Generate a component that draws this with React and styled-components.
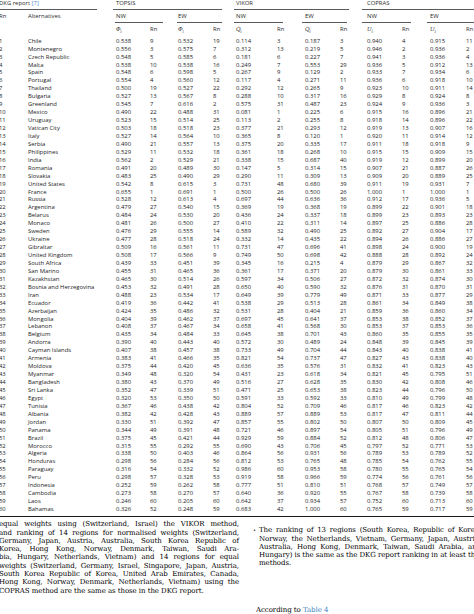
import React from 'react'
import styled, { createGlobalStyle } from 'styled-components'

const GlobalStyle = createGlobalStyle`
  html, body {
    margin: 0;
    padding: 0;
    background: #fff;
  }
`

const COLS = '29px 88px 34px 28px 35px 23px 41px 28px 35px 27px 35px 28px 36px 40px'

const Page = styled.div`
  width: 474px;
  height: 614px;
  overflow: hidden;
  background: #fff;
`

const Sheet = styled.div`
  width: 540px;
  margin: -1px 0 0 -1px;
  font-family: "Open Sans", "Liberation Sans", Arial, sans-serif;
  color: #1c1c1c;
`

const HeadRow = styled.div`
  display: grid;
  grid-template-columns: ${COLS};
  font-size: 5.9px;
  line-height: 8px;
  margin-top: ${p => p.$mt || 0}px;
`

const Group = styled.div`
  grid-column: span ${p => p.$span};
  margin: 0 ${p => p.$mr || 0}px 0 ${p => p.$ml || 0}px;
  padding: 0 0 2px ${p => -(p.$ml || 0)}px;
  border-bottom: 0.9px solid #5a5a5a;
  white-space: nowrap;
  color: #2a2a2a;
`

const HeadCell = styled.div`
  white-space: nowrap;
  color: #2a2a2a;
`

const Ref = styled.span`
  color: #4a86c8;
`

const Greek = styled.i`
  font-family: "DejaVu Serif", serif;
  font-size: 5.6px;
`

const Sub = styled.sub`
  font-size: 4px;
  line-height: 0;
  vertical-align: -1px;
`

const Body = styled.div`
  display: grid;
  grid-template-columns: ${COLS};
  grid-auto-rows: 7.95px;
  font-size: 5.9px;
  line-height: 7.95px;
  margin-top: 4.7px;
  padding-bottom: 2px;
  border-bottom: 1.3px solid #1a1a1a;
`

const Cell = styled.div`
  white-space: nowrap;
`

const Prose = styled.div`
  display: flex;
  gap: 10px;
  font-family: "DejaVu Serif", "Liberation Serif", serif;
  font-size: 7px;
  letter-spacing: -0.06px;
  line-height: 8.3px;
  color: #000;
`

const LeftCol = styled.div`
  flex: none;
  width: 240px;
  padding-top: 3.3px;
`

const RightCol = styled.div`
  flex: none;
  width: 240px;
  padding-top: 9.3px;
`

const Line = styled.div`
  white-space: nowrap;
  text-align: ${p => (p.$last ? 'left' : 'justify')};
  text-align-last: ${p => (p.$last ? 'left' : 'justify')};
`

const Item = styled.div`
  display: flex;
`

const Bullet = styled.span`
  flex: none;
  width: 10px;
  padding-left: 4px;
  box-sizing: border-box;
  font-size: 5px;
`

const ItemText = styled.div`
  flex: none;
  width: 222px;
`

const Para = styled.div`
  margin-top: 38.5px;
  padding-left: 7px;
  white-space: nowrap;
`

const Link = styled.span`
  color: #3b7fc4;
`

const rows = [
  ['Chile', '0.538', 9, '0.532', 19, '0.114', 3, '0.187', 3, '0.940', 4, '0.915', 11],
  ['Montenegro', '0.556', 3, '0.575', 7, '0.312', 13, '0.219', 5, '0.946', 2, '0.936', 2],
  ['Czech Republic', '0.548', 5, '0.585', 6, '0.181', 6, '0.227', 7, '0.941', 3, '0.936', 4],
  ['Malta', '0.538', 10, '0.538', 16, '0.249', 7, '0.553', 29, '0.936', 5, '0.912', 13],
  ['Spain', '0.548', 6, '0.598', 5, '0.267', 9, '0.129', 2, '0.933', 7, '0.934', 6],
  ['Portugal', '0.554', 4, '0.560', 12, '0.117', 4, '0.271', 11, '0.936', 6, '0.918', 10],
  ['Thailand', '0.500', 19, '0.527', 22, '0.292', 12, '0.265', 9, '0.923', 10, '0.911', 14],
  ['Bulgaria', '0.527', 13, '0.567', 8, '0.288', 10, '0.317', 16, '0.929', 8, '0.924', 8],
  ['Greenland', '0.545', 7, '0.616', 2, '0.575', 31, '0.487', 23, '0.924', 9, '0.936', 3],
  ['Mexico', '0.490', 22, '0.488', 31, '0.081', 1, '0.225', 6, '0.915', 16, '0.896', 21],
  ['Uruguay', '0.523', 15, '0.514', 25, '0.113', 2, '0.255', 8, '0.918', 14, '0.896', 22],
  ['Vatican City', '0.503', 18, '0.518', 23, '0.377', 21, '0.293', 12, '0.919', 13, '0.907', 16],
  ['Italy', '0.527', 14, '0.564', 10, '0.365', 8, '0.120', 1, '0.920', 11, '0.914', 12],
  ['Serbia', '0.490', 21, '0.557', 13, '0.375', 20, '0.335', 17, '0.911', 18, '0.918', 9],
  ['Philippines', '0.529', 11, '0.532', 18, '0.361', 18, '0.268', 10, '0.915', 15, '0.909', 15],
  ['India', '0.562', 2, '0.529', 21, '0.338', 15, '0.687', 40, '0.919', 12, '0.899', 20],
  ['Romania', '0.491', 20, '0.489', 30, '0.147', 5, '0.314', 15, '0.907', 21, '0.887', 26],
  ['Slovakia', '0.483', 25, '0.490', 29, '0.290', 11, '0.309', 13, '0.909', 20, '0.889', 25],
  ['United States', '0.542', 8, '0.615', 3, '0.731', 48, '0.680', 39, '0.911', 19, '0.931', 7],
  ['France', '0.655', 1, '0.691', 1, '0.500', 26, '0.500', 26, '1.000', 1, '1.000', 1],
  ['Russia', '0.528', 12, '0.613', 4, '0.697', 44, '0.636', 36, '0.912', 17, '0.936', 5],
  ['Argentina', '0.479', 27, '0.540', 15, '0.369', 19, '0.368', 19, '0.899', 22, '0.901', 18],
  ['Belarus', '0.484', 24, '0.530', 20, '0.436', 24, '0.337', 18, '0.899', 23, '0.893', 23],
  ['Monaco', '0.481', 26, '0.500', 27, '0.410', 22, '0.311', 14, '0.897', 25, '0.886', 28],
  ['Sweden', '0.476', 29, '0.555', 14, '0.589', 32, '0.490', 25, '0.892', 27, '0.904', 17],
  ['Ukraine', '0.477', 28, '0.518', 24, '0.332', 14, '0.435', 22, '0.894', 26, '0.886', 27],
  ['Gibraltar', '0.509', 16, '0.561', 11, '0.731', 47, '0.696', 41, '0.898', 24, '0.900', 19],
  ['United Kingdom', '0.508', 17, '0.566', 9, '0.749', 50, '0.698', 42, '0.888', 28, '0.892', 24],
  ['South Africa', '0.439', 33, '0.451', 39, '0.345', 16, '0.215', 4, '0.879', 29, '0.867', 32],
  ['San Marino', '0.455', 31, '0.465', 36, '0.361', 17, '0.371', 20, '0.879', 30, '0.861', 33],
  ['Kazakhstan', '0.465', 30, '0.514', 26, '0.597', 34, '0.506', 27, '0.872', 32, '0.874', 30],
  ['Bosnia and Herzegovina', '0.453', 32, '0.491', 28, '0.650', 40, '0.590', 32, '0.876', 31, '0.870', 31],
  ['Iran', '0.488', 23, '0.534', 17, '0.649', 39, '0.779', 49, '0.871', 33, '0.877', 29],
  ['Ecuador', '0.419', 36, '0.442', 41, '0.538', 29, '0.513', 28, '0.861', 34, '0.849', 38],
  ['Azerbaijan', '0.424', 35, '0.486', 32, '0.531', 28, '0.404', 21, '0.859', 36, '0.860', 34],
  ['Mongolia', '0.404', 39, '0.462', 37, '0.697', 45, '0.641', 37, '0.853', 38, '0.852', 37],
  ['Lebanon', '0.408', 37, '0.467', 34, '0.658', 41, '0.568', 30, '0.853', 37, '0.853', 36],
  ['Belgium', '0.435', 34, '0.484', 33, '0.645', 38, '0.701', 43, '0.860', 35, '0.855', 35],
  ['Andorra', '0.390', 40, '0.443', 40, '0.572', 30, '0.489', 24, '0.848', 39, '0.845', 39],
  ['Cayman Islands', '0.407', 38, '0.457', 38, '0.733', 49, '0.704', 44, '0.843', 40, '0.838', 41],
  ['Armenia', '0.383', 41, '0.466', 35, '0.821', 54, '0.737', 47, '0.827', 43, '0.838', 40],
  ['Moldova', '0.375', 44, '0.420', 45, '0.636', 35, '0.576', 31, '0.832', 41, '0.823', 43],
  ['Myanmar', '0.349', 48, '0.320', 54, '0.431', 23, '0.618', 34, '0.821', 45, '0.795', 51],
  ['Bangladesh', '0.380', 43, '0.370', 49, '0.516', 27, '0.628', 35, '0.830', 42, '0.808', 46],
  ['Sri Lanka', '0.352', 47, '0.339', 51, '0.471', 25, '0.653', 38, '0.823', 44, '0.796', 50],
  ['Egypt', '0.320', 53, '0.350', 50, '0.591', 33, '0.592', 33, '0.810', 49, '0.799', 48],
  ['Tunisia', '0.367', 46, '0.438', 42, '0.804', 52, '0.709', 46, '0.817', 46, '0.823', 42],
  ['Albania', '0.382', 42, '0.428', 43, '0.889', 57, '0.889', 53, '0.817', 47, '0.811', 44],
  ['Jordan', '0.330', 51, '0.392', 47, '0.857', 55, '0.802', 50, '0.807', 50, '0.809', 45],
  ['Panama', '0.344', 49, '0.391', 48, '0.721', 46, '0.897', 54, '0.805', 51, '0.796', 49],
  ['Brazil', '0.375', 45, '0.421', 44, '0.929', 59, '0.884', 52, '0.812', 48, '0.806', 47],
  ['Morocco', '0.315', 55, '0.292', 55, '0.690', 43, '0.706', 45, '0.797', 52, '0.771', 53],
  ['Algeria', '0.338', 50, '0.403', 46, '0.864', 56, '0.931', 56, '0.789', 53, '0.789', 52],
  ['Honduras', '0.298', 56, '0.284', 56, '0.812', 53, '0.765', 48, '0.785', 54, '0.762', 55],
  ['Paraguay', '0.316', 54, '0.332', 52, '0.986', 60, '0.953', 58, '0.780', 55, '0.765', 54],
  ['Peru', '0.298', 57, '0.328', 53, '0.919', 58, '0.966', 59, '0.774', 56, '0.761', 56],
  ['Indonesia', '0.252', 59, '0.262', 58, '0.777', 51, '0.810', 51, '0.768', 57, '0.749', 57],
  ['Cambodia', '0.273', 58, '0.270', 57, '0.640', 36, '0.920', 55, '0.767', 58, '0.739', 58],
  ['Laos', '0.246', 60, '0.205', 60, '0.642', 37, '0.934', 57, '0.752', 60, '0.713', 60],
  ['Bahamas', '0.326', 52, '0.248', 59, '0.683', 42, '1.000', 60, '0.765', 59, '0.717', 59],
]

const leftLines = [
  'equal weights using (Switzerland, Israel) the VIKOR method,',
  'and ranking of 14 regions for normalised weights (Switzerland,',
  'Germany, Japan, Austria, Australia, South Korea Republic of',
  'Korea, Hong Kong, Norway, Denmark, Taiwan, Saudi Ara-',
  'bia, Hungary, Netherlands, Vietnam) and 14 regions for equal',
  'weights (Switzerland, Germany, Israel, Singapore, Japan, Austria,',
  'South Korea Republic of Korea, United Arab Emirates, Canada,',
  'Hong Kong, Norway, Denmark, Netherlands, Vietnam) using the',
  'COPRAS method are the same as those in the DKG report.',
]

const rightLines = [
  'The ranking of 13 regions (South Korea, Republic of Korea,',
  'Norway, the Netherlands, Vietnam, Germany, Japan, Austria,',
  'Australia, Hong Kong, Denmark, Taiwan, Saudi Arabia, and',
  'Hungary) is the same as the DKG report ranking in at least three',
  'methods.',
]

const Sym = ({ ch }) => (
  <span>
    <Greek>{ch}</Greek>
    <Sub>j</Sub>
  </span>
)

export default function App() {
  return (
    <Page>
      <GlobalStyle />
      <Sheet>
        <HeadRow>
          <Group $span={2} $mr={19}>
            DKG report <Ref>[7]</Ref>
          </Group>
          <Group $span={4} $ml={-3} $mr={14}>TOPSIS</Group>
          <Group $span={4} $ml={-2} $mr={18}>VIKOR</Group>
          <Group $span={4} $ml={-5}>COPRAS</Group>
        </HeadRow>
        <HeadRow $mt={2}>
          <HeadCell>Rn</HeadCell>
          <HeadCell>Alternatives</HeadCell>
          <Group $span={2} $ml={-1} $mr={15}>NW</Group>
          <Group $span={2} $ml={-1} $mr={14}>EW</Group>
          <Group $span={2} $ml={-2} $mr={22}>NW</Group>
          <Group $span={2} $ml={-3} $mr={20}>EW</Group>
          <Group $span={2} $ml={-5} $mr={19}>NW</Group>
          <Group $span={2} $ml={-3}>EW</Group>
        </HeadRow>
        <HeadRow $mt={2}>
          <HeadCell />
          <HeadCell />
          <HeadCell><Sym ch="Φ" /></HeadCell>
          <HeadCell>Rn</HeadCell>
          <HeadCell><Sym ch="Φ" /></HeadCell>
          <HeadCell>Rn</HeadCell>
          <HeadCell><Sym ch="Q" /></HeadCell>
          <HeadCell>Rn</HeadCell>
          <HeadCell><Sym ch="Q" /></HeadCell>
          <HeadCell>Rn</HeadCell>
          <HeadCell><Sym ch="U" /></HeadCell>
          <HeadCell>Rn</HeadCell>
          <HeadCell><Sym ch="U" /></HeadCell>
          <HeadCell>Rn</HeadCell>
        </HeadRow>
        <Body>
          {rows.map((r, i) => (
            <React.Fragment key={r[0]}>
              <Cell>{i + 1}</Cell>
              {r.map((v, j) => (
                <Cell key={j}>{v}</Cell>
              ))}
            </React.Fragment>
          ))}
        </Body>
        <Prose>
          <LeftCol>
            {leftLines.map((t, i) => (
              <Line key={i} $last={i === leftLines.length - 1}>{t}</Line>
            ))}
          </LeftCol>
          <RightCol>
            <Item>
              <Bullet>•</Bullet>
              <ItemText>
                {rightLines.map((t, i) => (
                  <Line key={i} $last={i === rightLines.length - 1}>{t}</Line>
                ))}
              </ItemText>
            </Item>
            <Para>
              According to <Link>Table 4</Link>
            </Para>
          </RightCol>
        </Prose>
      </Sheet>
    </Page>
  )
}
